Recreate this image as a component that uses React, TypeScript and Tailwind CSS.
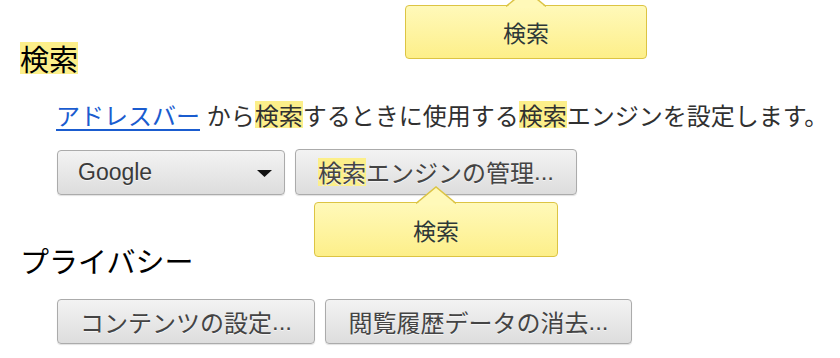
import React from "react";

function Hl({ children, h }: { children: React.ReactNode; h: string }) {
  return <span className={`inline-block bg-[#fcef8a] ${h}`}>{children}</span>;
}

function Btn({ children, w }: { children: React.ReactNode; w: string }) {
  return (
    <div
      className={`flex items-center justify-center ${w} rounded-[4px] border-[1.5px] border-[#ababab] bg-linear-to-b from-[#f3f3f3] to-[#dddddd] font-['Liberation_Sans','Noto_Sans_CJK_JP',sans-serif] text-[24px] leading-[28px] text-[#444] shadow-[0_1px_1px_rgba(0,0,0,0.12)] [text-shadow:0_1px_0_#f4f4f4]`}
    >
      {children}
    </div>
  );
}

function Bubble({ className }: { className: string }) {
  return (
    <div
      className={`absolute flex items-center justify-center rounded-[4px] border-[1.5px] border-[#dcc443] bg-linear-to-b from-[#fff9b9] to-[#fdef89] ${className}`}
    >
      <svg
        className="absolute left-1/2 top-[-17px] -translate-x-1/2"
        width="40"
        height="19"
        viewBox="0 0 40 19"
      >
        <polygon points="0,18.5 20,1 40,18.5" fill="#fff9b9" />
        <polyline points="0,17.5 20,1 40,17.5" fill="none" stroke="#dcc443" strokeWidth="1.5" />
      </svg>
      <span className="font-['Noto_Sans_CJK_JP',sans-serif] text-[23px] leading-[26px] text-[#2e3838]">
        検索
      </span>
    </div>
  );
}

export default function App() {
  return (
    <div className="relative h-[358px] w-[840px] overflow-hidden bg-white font-['Noto_Sans_CJK_JP',sans-serif]">
      <div className="flex flex-col pl-[20px]">
        <div className="mt-[42px] text-[29px] leading-[32px] text-black">
          <Hl h="h-[32px]">検索</Hl>
        </div>
        <div className="mt-[27px] ml-[36px] whitespace-nowrap text-[24px] leading-[27px] text-[#303030]">
          <span className="text-[#1a5ccf] underline decoration-[2px] underline-offset-[4px]">アドレスバー</span>
          <span className="font-['Liberation_Sans',sans-serif]"> </span>
          から<Hl h="h-[27px]">検索</Hl>するときに使用する<Hl h="h-[27px]">検索</Hl>エンジンを設定します。
        </div>
        <div className="mt-[19px] ml-[37px] flex items-end gap-[10px]">
          <div className="relative flex h-[45px] w-[228px] items-center rounded-[4px] border-[1.5px] border-[#ababab] bg-linear-to-b from-[#f3f3f3] to-[#dddddd] pl-[20px] font-['Liberation_Sans',sans-serif] text-[23px] text-[#3a3a3a] shadow-[0_1px_1px_rgba(0,0,0,0.12)] [text-shadow:0_1px_0_#f4f4f4]">
            Google
            <svg className="absolute right-[12px] top-[19px]" width="15" height="7" viewBox="0 0 15 7">
              <polygon points="0,0 15,0 7.5,7" fill="#111" />
            </svg>
          </div>
          <Btn w="h-[46px] w-[282px]">
            <span className="font-['Noto_Sans_CJK_JP',sans-serif]">
              <Hl h="h-[28px]">検索</Hl>エンジンの管理
            </span>
            ...
          </Btn>
        </div>
        <div className="mt-[49px] text-[29px] leading-[32px] text-black">プライバシー</div>
        <div className="mt-[23px] ml-[37px] flex gap-[10px]">
          <Btn w="h-[45px] w-[258px]">
            <span className="font-['Noto_Sans_CJK_JP',sans-serif]">コンテンツの設定</span>...
          </Btn>
          <Btn w="h-[45px] w-[307px]">
            <span className="font-['Noto_Sans_CJK_JP',sans-serif]">閲覧履歴データの消去</span>...
          </Btn>
        </div>
      </div>
      <Bubble className="left-[405px] top-[5px] h-[54px] w-[242px]" />
      <Bubble className="left-[314px] top-[202px] h-[55px] w-[244px]" />
    </div>
  );
}
